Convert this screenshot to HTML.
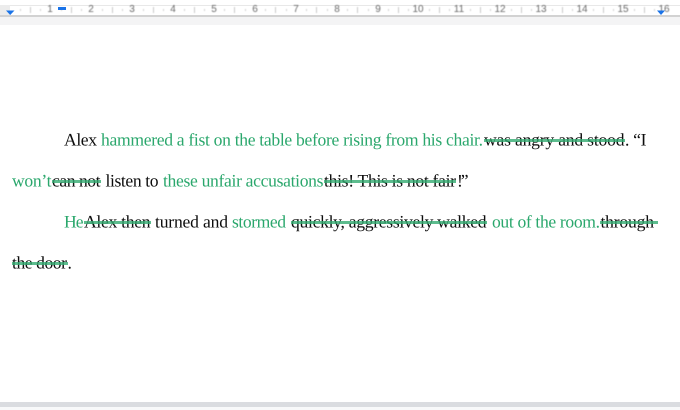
<!DOCTYPE html>
<html><head><meta charset="utf-8"><style>
html,body{margin:0;padding:0;background:#fff}
#p{position:relative;width:680px;height:410px;overflow:hidden;background:#fff}
.a{position:absolute}
svg.x{position:absolute;left:0;top:0;filter:blur(.3px)}
text{font-family:"Liberation Serif",serif;font-size:17.600px;fill:#0c0c0c;text-rendering:geometricPrecision}
text.g{fill:#2aa76c}
rect.s{fill:#35ab72;fill-opacity:.8}
#r{position:absolute;left:0;top:0;width:680px;height:20px;filter:blur(.4px)}
.n{position:absolute;top:4px;width:16px;margin-left:-8px;text-align:center;font:10px/11px "Liberation Sans",sans-serif;color:#6a6a6a}
.v{position:absolute;top:7px;width:1px;height:6px;background:#c8c8c8}
.d{position:absolute;top:9px;width:1px;height:2px;background:#d0d0d0}
</style></head><body><div id="p">
<div class="a" style="left:0;top:5px;width:680px;height:1px;background:#e8e8e8"></div>
<div class="a" style="left:0;top:5px;width:10px;height:10px;background:#ececec"></div>
<div class="a" style="left:0;top:15px;width:680px;height:2px;background:#d2d2d2"></div>
<div class="a" style="left:0;top:17px;width:680px;height:8px;background:#f4f4f5"></div>
<div id="r"><span class="d" style="left:20px"></span><span class="v" style="left:30px"></span><span class="d" style="left:40px"></span><span class="n" style="left:50px">1</span><span class="d" style="left:61px"></span><span class="v" style="left:71px"></span><span class="d" style="left:81px"></span><span class="n" style="left:91px">2</span><span class="d" style="left:102px"></span><span class="v" style="left:112px"></span><span class="d" style="left:122px"></span><span class="n" style="left:132px">3</span><span class="d" style="left:143px"></span><span class="v" style="left:153px"></span><span class="d" style="left:163px"></span><span class="n" style="left:173px">4</span><span class="d" style="left:184px"></span><span class="v" style="left:194px"></span><span class="d" style="left:204px"></span><span class="n" style="left:214px">5</span><span class="d" style="left:224px"></span><span class="v" style="left:234px"></span><span class="d" style="left:245px"></span><span class="n" style="left:255px">6</span><span class="d" style="left:265px"></span><span class="v" style="left:275px"></span><span class="d" style="left:286px"></span><span class="n" style="left:296px">7</span><span class="d" style="left:306px"></span><span class="v" style="left:316px"></span><span class="d" style="left:327px"></span><span class="n" style="left:337px">8</span><span class="d" style="left:347px"></span><span class="v" style="left:357px"></span><span class="d" style="left:368px"></span><span class="n" style="left:378px">9</span><span class="d" style="left:388px"></span><span class="v" style="left:398px"></span><span class="d" style="left:408px"></span><span class="n" style="left:418px">10</span><span class="d" style="left:429px"></span><span class="v" style="left:439px"></span><span class="d" style="left:449px"></span><span class="n" style="left:459px">11</span><span class="d" style="left:470px"></span><span class="v" style="left:480px"></span><span class="d" style="left:490px"></span><span class="n" style="left:500px">12</span><span class="d" style="left:511px"></span><span class="v" style="left:521px"></span><span class="d" style="left:531px"></span><span class="n" style="left:541px">13</span><span class="d" style="left:552px"></span><span class="v" style="left:562px"></span><span class="d" style="left:572px"></span><span class="n" style="left:582px">14</span><span class="d" style="left:593px"></span><span class="v" style="left:603px"></span><span class="d" style="left:613px"></span><span class="n" style="left:623px">15</span><span class="d" style="left:634px"></span><span class="v" style="left:644px"></span><span class="d" style="left:654px"></span><span class="n" style="left:664px">16</span></div>
<div class="a" style="left:58px;top:7px;width:8px;height:3px;background:#1a73e8"></div>
<svg class="a" style="left:0;top:0" width="680" height="20"><path d="M6 10.500h8.500L10.200 15z" fill="#1a73e8"/><path d="M657 10.500h8L661 15z" fill="#1a73e8"/></svg>

<svg class="x" width="680" height="410" viewBox="0 0 680 410">
<text x="64" y="145.500" textLength="33" lengthAdjust="spacing">Alex</text>
<text class="g" x="101" y="145.500" textLength="382" lengthAdjust="spacing">hammered a fist on the table before rising from his chair.</text>
<text x="484" y="145.500" textLength="140.500" lengthAdjust="spacing">was angry and stood</text>
<text x="625" y="145.500" textLength="21.500" lengthAdjust="spacing">. “I</text>
<rect class="s" x="484" y="139" width="141" height="3"/>

<text class="g" x="12" y="186.500" textLength="39.500" lengthAdjust="spacing">won’t</text>
<text x="52" y="186.500" textLength="48.500" lengthAdjust="spacing">can not</text>
<text x="105.500" y="186.500" textLength="53" lengthAdjust="spacing">listen to</text>
<text class="g" x="163" y="186.500" textLength="160.500" lengthAdjust="spacing">these unfair accusations</text>
<text x="324" y="186.500" textLength="132" lengthAdjust="spacing">this! This is not fair</text>
<text x="457" y="186.500" textLength="11.500" lengthAdjust="spacing">!”</text>
<rect class="s" x="52" y="180" width="49" height="3"/>
<rect class="s" x="324" y="180" width="132" height="3"/>

<text class="g" x="64" y="227.500" textLength="19.500" lengthAdjust="spacing">He</text>
<text x="84" y="227.500" textLength="66.500" lengthAdjust="spacing">Alex then</text>
<text x="155" y="227.500" textLength="73" lengthAdjust="spacing">turned and</text>
<text class="g" x="232" y="227.500" textLength="54" lengthAdjust="spacing">stormed</text>
<text x="291" y="227.500" textLength="195.500" lengthAdjust="spacing">quickly, aggressively walked</text>
<text class="g" x="492" y="227.500" textLength="108" lengthAdjust="spacing">out of the room.</text>
<text x="600.500" y="227.500" textLength="53.500" lengthAdjust="spacing">through</text>
<rect class="s" x="84" y="221" width="67" height="3"/>
<rect class="s" x="291" y="221" width="196" height="3"/>
<rect class="s" x="600" y="221" width="58" height="3"/>

<text x="12" y="268.500" textLength="55" lengthAdjust="spacing">the door</text>
<text x="67.500" y="268.500">.</text>
<rect class="s" x="12" y="262" width="56" height="3"/>
</svg>

<div class="a" style="left:0;top:402px;width:680px;height:5px;background:#dadce0"></div>
<div class="a" style="left:0;top:407px;width:680px;height:3px;background:#f8f9fa"></div>
</div></body></html>
